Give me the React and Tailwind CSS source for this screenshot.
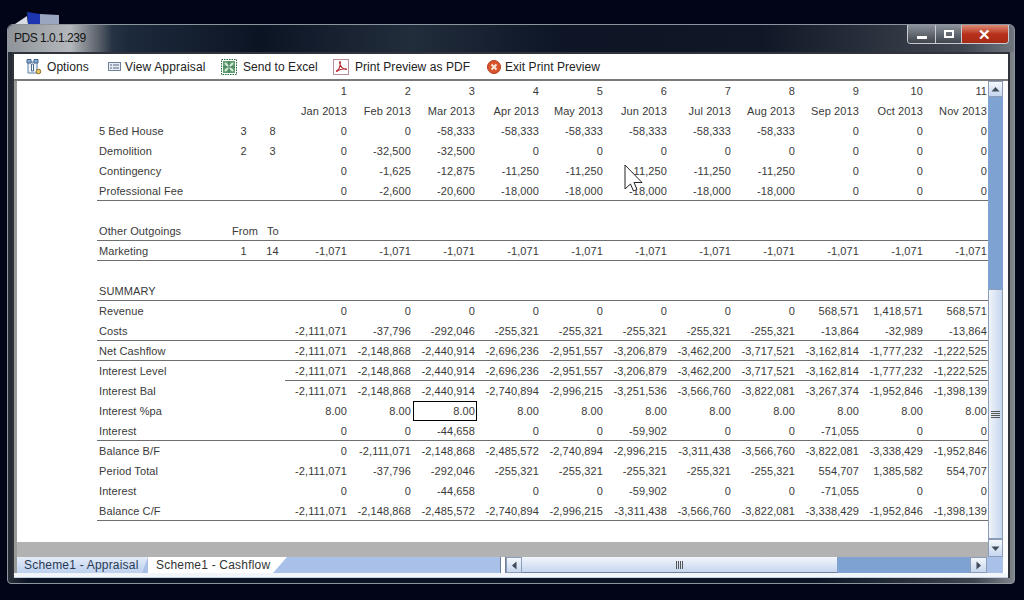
import React from 'react';

const months = ['Jan 2013', 'Feb 2013', 'Mar 2013', 'Apr 2013', 'May 2013', 'Jun 2013', 'Jul 2013', 'Aug 2013', 'Sep 2013', 'Oct 2013', 'Nov 2013'];

const rows = [
  { cells: ['1', '2', '3', '4', '5', '6', '7', '8', '9', '10', '11'] },
  { cells: months },
  { label: '5 Bed House', from: '3', to: '8', cells: ['0', '0', '-58,333', '-58,333', '-58,333', '-58,333', '-58,333', '-58,333', '0', '0', '0'] },
  { label: 'Demolition', from: '2', to: '3', cells: ['0', '-32,500', '-32,500', '0', '0', '0', '0', '0', '0', '0', '0'] },
  { label: 'Contingency', cells: ['0', '-1,625', '-12,875', '-11,250', '-11,250', '-11,250', '-11,250', '-11,250', '0', '0', '0'] },
  { label: 'Professional Fee', line: 'full', cells: ['0', '-2,600', '-20,600', '-18,000', '-18,000', '-18,000', '-18,000', '-18,000', '0', '0', '0'] },
  {},
  { label: 'Other Outgoings', from: 'From', to: 'To', line: 'full', header: true },
  { label: 'Marketing', from: '1', to: '14', line: 'full', cells: Array(11).fill('-1,071') },
  {},
  { label: 'SUMMARY', line: 'full' },
  { label: 'Revenue', cells: ['0', '0', '0', '0', '0', '0', '0', '0', '568,571', '1,418,571', '568,571'] },
  { label: 'Costs', line: 'full', cells: ['-2,111,071', '-37,796', '-292,046', '-255,321', '-255,321', '-255,321', '-255,321', '-255,321', '-13,864', '-32,989', '-13,864'] },
  { label: 'Net Cashflow', line: 'full', cells: ['-2,111,071', '-2,148,868', '-2,440,914', '-2,696,236', '-2,951,557', '-3,206,879', '-3,462,200', '-3,717,521', '-3,162,814', '-1,777,232', '-1,222,525'] },
  { label: 'Interest Level', line: 'cells', cells: ['-2,111,071', '-2,148,868', '-2,440,914', '-2,696,236', '-2,951,557', '-3,206,879', '-3,462,200', '-3,717,521', '-3,162,814', '-1,777,232', '-1,222,525'] },
  { label: 'Interest Bal', cells: ['-2,111,071', '-2,148,868', '-2,440,914', '-2,740,894', '-2,996,215', '-3,251,536', '-3,566,760', '-3,822,081', '-3,267,374', '-1,952,846', '-1,398,139'] },
  { label: 'Interest %pa', selected: 2, cells: Array(11).fill('8.00') },
  { label: 'Interest', line: 'full', cells: ['0', '0', '-44,658', '0', '0', '-59,902', '0', '0', '-71,055', '0', '0'] },
  { label: 'Balance B/F', cells: ['0', '-2,111,071', '-2,148,868', '-2,485,572', '-2,740,894', '-2,996,215', '-3,311,438', '-3,566,760', '-3,822,081', '-3,338,429', '-1,952,846'] },
  { label: 'Period Total', cells: ['-2,111,071', '-37,796', '-292,046', '-255,321', '-255,321', '-255,321', '-255,321', '-255,321', '554,707', '1,385,582', '554,707'] },
  { label: 'Interest', cells: ['0', '0', '-44,658', '0', '0', '-59,902', '0', '0', '-71,055', '0', '0'] },
  { label: 'Balance C/F', line: 'full', cells: ['-2,111,071', '-2,148,868', '-2,485,572', '-2,740,894', '-2,996,215', '-3,311,438', '-3,566,760', '-3,822,081', '-3,338,429', '-1,952,846', '-1,398,139'] },
];

const Row = ({ row }) => {
  const lineFull = row.line === 'full' ? 'border-b border-[#6f6f6f]' : 'border-b border-transparent';
  return (
    <div className="flex h-5 w-[972px] pl-20">
      <div className={`flex w-[188px] shrink-0 ${lineFull}`}>
        <div className="w-[130px] shrink-0 pl-0.5 leading-[21px]">{row.label}</div>
        <div className={`w-[33px] shrink-0 leading-[21px] ${row.header ? 'text-right pr-[2px]' : 'text-center'}`}>{row.from}</div>
        <div className={`w-[25px] shrink-0 leading-[21px] ${row.header ? 'pl-[7px]' : 'text-center'}`}>{row.to}</div>
      </div>
      {Array.from({ length: 11 }).map((_, i) => (
        <div
          key={i}
          className={`w-16 shrink-0 text-right pr-0.5 leading-[21px] whitespace-nowrap border-b ${row.line === 'cells' || row.line === 'full' ? 'border-[#6f6f6f]' : 'border-transparent'} ${row.selected === i ? 'outline outline-1 -outline-offset-1 outline-black' : ''}`}
        >
          {row.cells ? row.cells[i] : ''}
        </div>
      ))}
    </div>
  );
};

const ScrollButton = ({ dir, className }) => (
  <div className={`flex shrink-0 items-center justify-center bg-gradient-to-b from-[#f4f7fc] to-[#c6d6ee] border border-[#8a9cb8] ${className}`}>
    <svg width="9" height="9" viewBox="0 0 9 9">
      {dir === 'up' && <path d="M0.5 6.5 L4.5 2 L8.5 6.5 Z" fill="#3f4c5c" />}
      {dir === 'down' && <path d="M0.5 2.5 L4.5 7 L8.5 2.5 Z" fill="#3f4c5c" />}
      {dir === 'left' && <path d="M6.5 0.5 L2 4.5 L6.5 8.5 Z" fill="#3f4c5c" />}
      {dir === 'right' && <path d="M2.5 0.5 L7 4.5 L2.5 8.5 Z" fill="#3f4c5c" />}
    </svg>
  </div>
);

const OptionsIcon = () => (
  <svg width="16" height="17" viewBox="0 0 16 17" className="shrink-0">
    <path d="M2 4h9v11H2z" fill="#eef3f8" stroke="#5b7ea6" />
    <path d="M1 1.5h4v3.5H1zM8 1.5h4v3.5H8z" fill="#8fb0d4" stroke="#3e5f86" />
    <path d="M5.5 6l2 0 0 7-2 0z" fill="#fff" stroke="#4a6a8f" />
    <circle cx="12.5" cy="13.5" r="2.3" fill="#e4c468" stroke="#8d6f22" />
  </svg>
);

const AppraisalIcon = () => (
  <svg width="13" height="9" viewBox="0 0 13 9" className="shrink-0">
    <rect x="0.5" y="0.5" width="12" height="8" fill="#e6edf6" stroke="#6f7f95" />
    <path d="M2 3h2M5 3h6M2 6h2M5 6h6" stroke="#55657b" />
  </svg>
);

const ExcelIcon = () => (
  <svg width="16" height="16" viewBox="0 0 16 16" className="shrink-0">
    <rect x="0.5" y="0.5" width="15" height="15" fill="#fff" stroke="#2b6a3c" strokeDasharray="1.5 1" />
    <rect x="2" y="2" width="12" height="12" fill="#5e9e70" />
    <path d="M4 4l8 8M12 4l-8 8" stroke="#d8eadc" strokeWidth="2" />
    <path d="M8 2v12M2 8h12" stroke="#2f6f42" strokeWidth="0.7" />
  </svg>
);

const PdfIcon = () => (
  <svg width="16" height="16" viewBox="0 0 16 16" fill="none" className="shrink-0">
    <rect x="0.5" y="0.5" width="15" height="15" fill="#fff" stroke="#b98f97" />
    <path d="M3 12.5C5.5 11 7.5 7 7.3 3.2 7.2 2.3 6.4 2.6 6.6 3.6 7.2 7 9.5 10 13 10.5 13.8 10.5 13.6 9.7 12.6 9.7 9.8 9.7 6 10.7 3.6 12.7" stroke="#b3242d" strokeWidth="1.1" />
  </svg>
);

const CloseIcon = () => (
  <svg width="14" height="14" viewBox="0 0 14 14" className="shrink-0">
    <circle cx="7" cy="7" r="6.5" fill="#d9542b" stroke="#b53a1e" />
    <path d="M4.5 4.5l5 5M9.5 4.5l-5 5" stroke="#f6e6dc" strokeWidth="2" />
  </svg>
);

const ToolItem = ({ icon, label, className }) => (
  <div className={`flex shrink-0 items-center ${className}`}>
    {icon}
    <span>{label}</span>
  </div>
);

export default function App() {
  return (
    <div className="relative h-[600px] w-[1024px] overflow-hidden bg-[#020518] pt-6 pl-[7px] text-[11px] tracking-[0.1px] text-[#3a3a3a] [font-family:'Liberation_Sans',Arial,sans-serif]">
      {/* bit of a desktop icon behind the window */}
      <svg className="absolute left-[14px] top-[10px]" width="46" height="14" viewBox="0 0 46 14">
        <path d="M1 14 L13 6 L14 14 Z" fill="#d8dde6" />
        <path d="M13 2 L26 4 L26 14 L14 14 Z" fill="#1c35b0" />
        <path d="M26 4 L45 5 L45 14 L26 14 Z" fill="#9aa6c0" />
      </svg>

      <div className="flex h-[560px] w-[1008px] flex-col rounded-t-md rounded-b-sm border border-[#8c949e] bg-[linear-gradient(90deg,#2a3038_0,#0b1424_2%,#0b1424_80%,#3e444c_96%,#80858b_100%)]">
        {/* title bar */}
        <div className="flex h-[27px] shrink-0 items-start justify-between rounded-t-md bg-[linear-gradient(90deg,#6d747d_0,#4f5a68_3%,#1d2a3c_12%,#0c1424_25%,#222d3c_40%,#0d1526_55%,#101827_75%,#3f4650_95%,#70767e_100%)]">
          <div className="h-[27px] w-[104px] rounded-tl-md bg-[linear-gradient(90deg,#8f949a_0,#b4b8bc_60%,#6a7078_82%,transparent_100%)] pl-1.5 pt-[5px] text-[12px] leading-4 tracking-[-0.5px] text-[#141414]">PDS 1.0.1.239</div>
          <div className="mr-[5px] flex h-[19px] w-[102px] overflow-hidden rounded-b-[4px] border border-t-0 border-[#c8ccd2]">
            <div className="flex w-[28px] items-end justify-center border-r border-[#c8ccd2] bg-gradient-to-b from-[#8d939b] to-[#3f454d] pb-1">
              <div className="h-[3px] w-[10px] bg-white" />
            </div>
            <div className="flex w-[26px] items-center justify-center border-r border-[#c8ccd2] bg-gradient-to-b from-[#8d939b] to-[#3f454d]">
              <div className="h-[8px] w-[10px] border-2 border-white" />
            </div>
            <div className="flex flex-1 items-center justify-center bg-gradient-to-b from-[#d98a74] via-[#b8301a] to-[#a52a16] text-[15px] font-bold leading-none text-white">✕</div>
          </div>
        </div>

        {/* inner frame */}
        <div className="mx-1 mb-[5px] flex min-h-0 flex-1 flex-col border-x-2 border-t-2 border-[#30343a] bg-white">
          {/* toolbar */}
          <div className="flex h-[27px] shrink-0 items-center border-b-2 border-[#7a7a7a] pl-3 text-[12px] tracking-[0.05px] text-[#222]">
            <ToolItem className="w-[82px] gap-[5px]" icon={<OptionsIcon />} label="Options" />
            <ToolItem className="w-[113px] gap-1 tracking-[0.15px]" icon={<AppraisalIcon />} label="View Appraisal" />
            <ToolItem className="w-[112px] gap-[6px]" icon={<ExcelIcon />} label="Send to Excel" />
            <ToolItem className="w-[154px] gap-[6px]" icon={<PdfIcon />} label="Print Preview as PDF" />
            <ToolItem className="gap-1" icon={<CloseIcon />} label="Exit Print Preview" />
          </div>

          {/* sheet and vertical scrollbar */}
          <div className="flex h-[476px] shrink-0 border-l-[3px] border-[#9a9a9a] pr-[5px]">
            <div className="flex min-w-0 flex-1 flex-col">
              <div className="min-h-0 flex-1 overflow-hidden">
                {rows.map((row, i) => (
                  <Row key={i} row={row} />
                ))}
              </div>
              <div className="h-[15px] shrink-0 bg-[#b2b2b2]" />
            </div>
            <div className="flex w-[15px] shrink-0 flex-col bg-[#7ea3d3]">
              <ScrollButton dir="up" className="h-[16px]" />
              <div className="h-[192px] shrink-0" />
              <div className="flex flex-1 items-center justify-center border border-[#8a9cb8] bg-gradient-to-r from-[#f0f4fa] to-[#c6d6ee]">
                <div className="h-[7px] w-[9px] bg-[repeating-linear-gradient(180deg,#555_0_1px,transparent_1px_2px)]" />
              </div>
              <ScrollButton dir="down" className="h-[18px]" />
            </div>
          </div>

          {/* tabs and horizontal scrollbar */}
          <div className="flex h-4 shrink-0 border-l-[3px] border-[#9a9a9a] bg-[#a9c0e8] mr-[5px]">
            <div className="flex h-full w-[131px] shrink-0 items-center bg-gradient-to-b from-[#e4ecf8] to-[#bcd0ee] pl-[7px] text-[12px] tracking-[0.2px] text-[#2a3a55] [clip-path:polygon(0_0,100%_0,calc(100%-6px)_100%,0_100%)]">Scheme1 - Appraisal</div>
            <div className="-mr-px flex h-full w-[139px] shrink-0 items-center bg-white pl-[8px] text-[12px] tracking-[0.2px] text-[#333] [clip-path:polygon(0_0,100%_0,calc(100%-14px)_100%,0_100%)]">Scheme1 - Cashflow</div>
            <div className="w-[214px] shrink-0" />
            <div className="w-[6px] shrink-0 border-x border-[#6f7f95] bg-white" />
            <ScrollButton dir="left" className="w-[16px]" />
            <div className="flex w-[315px] shrink-0 items-center justify-center border-b border-[#6f7f95] bg-gradient-to-b from-[#f2f6fc] to-[#c6d6ee]">
              <div className="h-[8px] w-[7px] bg-[repeating-linear-gradient(90deg,#555_0_1px,transparent_1px_2px)]" />
            </div>
            <div className="w-[133px] shrink-0 bg-[#7ea3d3]" />
            <ScrollButton dir="right" className="w-[17px]" />
            <div className="flex-1 bg-[#a9c0e8]" />
          </div>

          {/* white strip under the tabs */}
          <div className="flex-1 border-b border-[#c4d2e6] bg-[#f2f5fa]" />
        </div>
      </div>

      {/* mouse pointer caught in the recording */}
      <svg className="absolute left-[624px] top-[164px]" width="20" height="30" viewBox="0 0 20 30">
        <path d="M1 1 L1 25 L6.5 20 L9.5 27 L13 25.5 L10 18.5 L18 18.5 Z" fill="#fff" stroke="#222" strokeWidth="1" />
      </svg>
    </div>
  );
}
